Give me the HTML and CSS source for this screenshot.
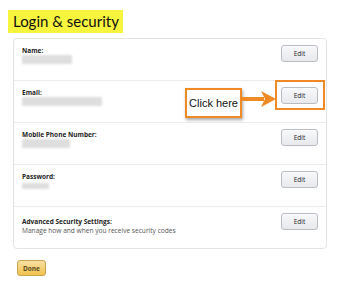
FILE: index.html
```html
<!DOCTYPE html>
<html>
<head>
<meta charset="utf-8">
<link rel="stylesheet" href="styles.css">
</head>
<body>
<div class="page">
  <h1 class="title">Login &amp; security</h1>
  <div class="card">
    <div class="row">
      <div class="info">
        <div class="label">Name:</div>
        <div class="blur" style="width:50px"></div>
      </div>
      <button class="edit">Edit</button>
    </div>
    <div class="row">
      <div class="info">
        <div class="label">Email:</div>
        <div class="blur" style="width:80px"></div>
      </div>
      <button class="edit">Edit</button>
    </div>
    <div class="row">
      <div class="info">
        <div class="label">Mobile Phone Number:</div>
        <div class="blur" style="width:48px"></div>
      </div>
      <button class="edit">Edit</button>
    </div>
    <div class="row">
      <div class="info">
        <div class="label">Password:</div>
        <div class="blur small" style="width:27px"></div>
      </div>
      <button class="edit">Edit</button>
    </div>
    <div class="row adv">
      <div class="info">
        <div class="label">Advanced Security Settings:</div>
        <div class="desc">Manage how and when you receive security codes</div>
      </div>
      <button class="edit">Edit</button>
    </div>
  </div>
  <button class="done">Done</button>

  <div class="callout">Click here</div>
  <svg class="arrow" width="36" height="18" viewBox="0 0 36 18">
    <rect x="0" y="7" width="22" height="4" fill="#f08a24"/>
    <polygon points="19,1 34,9 19,17 23,9" fill="#f08a24"/>
  </svg>
  <div class="target"></div>
</div>
</body>
</html>
```
FILE: styles.css
```css
* { box-sizing: border-box; }
html, body { margin: 0; padding: 0; background: #fff; }
body { width: 350px; height: 283px; overflow: hidden; font-family: "Open Sans", "DejaVu Sans", sans-serif; }
.page { position: relative; padding: 10px 0 0 0; }
.title {
  display: inline-block;
  margin: 0 0 0 8px;
  height: 23px;
  line-height: 23px;
  padding: 0 4px 0 5px;
  background: #f7f53e;
  font-family: "Lato", "Liberation Sans", sans-serif;
  font-weight: 400;
  font-size: 15px;
  color: #111;
}
.card {
  margin: 5px 23px 0 13px;
  border: 1px solid #e3e3e3;
  border-radius: 4px;
  height: 211px;
  overflow: hidden;
}
.row {
  height: 42px;
  display: flex;
  justify-content: space-between;
  align-items: flex-start;
  padding: 6px 8px 0 8px;
  border-top: 1px solid #ececec;
}
.row:first-child { border-top: none; height: 41px; }
.info { padding-top: 1px; }
.label {
  font-size: 6.5px;
  font-weight: 700;
  color: #222;
  line-height: 9px;
}
.blur {
  height: 9px;
  background: #dedede;
  filter: blur(1px);
  border-radius: 1px;
}
.blur.small { height: 6px; margin-top: 2px; }
.adv .info { padding-top: 4px; }
.desc {
  font-size: 6.6px;
  color: #555;
  line-height: 9px;
}
.edit {
  width: 37px;
  height: 17px;
  padding: 0;
  border: 1px solid #b9bcc1;
  border-radius: 3px;
  background: linear-gradient(#f7f8fa, #e7e9ec);
  font-family: "Open Sans", sans-serif;
  font-size: 6.5px;
  color: #222;
  box-shadow: 0 1px 0 rgba(255,255,255,.6) inset;
}
.done {
  display: block;
  margin: 11px 0 0 17px;
  width: 29px;
  height: 16px;
  padding: 0;
  border: 1px solid #c7a44e;
  border-radius: 3px;
  background: linear-gradient(#f7dfa5, #f0c14b);
  font-family: "Open Sans", sans-serif;
  font-size: 6.5px;
  font-weight: 700;
  color: #5a4a20;
}
.callout {
  position: absolute;
  left: 185px;
  top: 88px;
  width: 57px;
  height: 30px;
  border: 2px solid #f08a24;
  background: #fff;
  box-shadow: 1px 2px 3px rgba(0,0,0,.35);
  font-family: "Liberation Sans", Arial, sans-serif;
  font-size: 11px;
  color: #111;
  display: flex;
  align-items: center;
  justify-content: center;
}
.arrow { position: absolute; left: 242px; top: 90px; }
.target {
  position: absolute;
  left: 275px;
  top: 80px;
  width: 50px;
  height: 30px;
  border: 2px solid #f08a24;
}
```
